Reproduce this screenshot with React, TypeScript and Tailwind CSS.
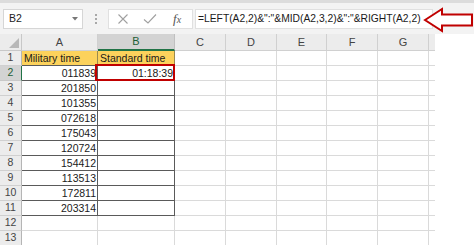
import React from "react";

const cols = ["A", "B", "C", "D", "E", "F", "G", ""];
const widths = [76, 77, 51, 51, 50, 51, 51, 6];
const data = ["011839", "201850", "101355", "072618", "175043", "120724", "154412", "113513", "172811", "203314"];

function Row({ n }: { n: number }) {
  const inTable = n >= 2 && n <= 11;
  const selectedRow = n === 2;
  return (
    <div className="flex h-[15px]">
      <div
        className={`w-[22px] shrink-0 flex items-center justify-center border-b border-r text-[10.5px] ${
          selectedRow
            ? "bg-[#d3d3d3] border-r-[#217346] border-b-[#c8c8c8] text-[#1e5e36]"
            : "bg-[#ececec] border-b-[#d0d0d0] border-r-[#b5b5b5] text-[#444]"
        } ${inTable && !selectedRow ? "border-r-[#6a6a6a]" : ""}`}
      >
        {n}
      </div>
      {widths.map((w, i) => {
        let cls = "border-b border-r border-[#dadada]";
        let content: React.ReactNode = null;
        if (n === 1 && i < 2) {
          cls = "bg-[#fcd25c] border-b border-r border-b-[#5a5a5a] border-r-[#9a8a50] text-[#1a1a1a] pl-[2px]";
          content = i === 0 ? "Military time" : "Standard time";
        } else if (inTable && i < 2) {
          cls = "border-b border-r border-[#5a5a5a] text-right pr-[1px] text-[#1a1a1a]";
          if (i === 0) content = data[n - 2];
          if (i === 1 && n === 2) content = "01:18:39";
        } else if (i === 7) {
          cls = "border-b border-[#dadada]";
        }
        return (
          <div
            key={i}
            style={{ width: w }}
            className={`shrink-0 relative h-[15px] leading-[14px] text-[10.5px] overflow-visible whitespace-nowrap ${cls}`}
          >
            {content}
            {n === 2 && i === 1 && (
              <div className="absolute left-[-3px] top-[-2px] right-[-1px] bottom-[-1px] border-2 border-[#c00000]" />
            )}
          </div>
        );
      })}
    </div>
  );
}

export default function App() {
  return (
    <div
      className="w-[474px] h-[245px] bg-white overflow-hidden relative"
      style={{ fontFamily: '"Liberation Sans", Arial, sans-serif' }}
    >
      {/* formula bar area */}
      <div className="h-[3px] bg-[#dcdcdc]" />
      <div className="h-[31px] bg-[#f3f3f3] flex items-start pt-[6px] pl-[3px]">
        <div className="w-[80px] h-[20px] bg-white border border-[#d6d6d6] flex items-center justify-between pl-[5px] pr-[4px] text-[10.5px] text-[#222]">
          <span>B2</span>
          <svg width="6" height="4" viewBox="0 0 6 4">
            <path d="M0 0 L6 0 L3 3.5 Z" fill="#777" />
          </svg>
        </div>
        <div className="w-[25px] h-[20px] flex flex-col items-center justify-center gap-[2px]">
          <span className="w-[2px] h-[2px] bg-[#a8a8a8]" />
          <span className="w-[2px] h-[2px] bg-[#a8a8a8]" />
          <span className="w-[2px] h-[2px] bg-[#a8a8a8]" />
        </div>
        <div className="w-[85px] h-[20px] bg-white border border-[#e0e0e0] flex items-center">
          <svg width="12" height="12" viewBox="0 0 12 12" className="ml-[8px]">
            <path d="M1.5 1.5 L10.5 10.5 M10.5 1.5 L1.5 10.5" stroke="#a0a0a0" strokeWidth="1.1" />
          </svg>
          <svg width="14" height="12" viewBox="0 0 14 12" className="ml-[14px]">
            <path d="M1 6.5 L5 10 L13 1.5" stroke="#a0a0a0" strokeWidth="1.1" fill="none" />
          </svg>
          <span
            className="ml-[16px] text-[13px] italic text-[#555]"
            style={{ fontFamily: '"Liberation Serif", "Times New Roman", serif' }}
          >
            f<span className="text-[10px]">x</span>
          </span>
        </div>
        <div className="ml-[2px] w-[238px] h-[20px] bg-white border border-[#e0e0e0] flex items-center pl-[2px] text-[10.3px] text-[#1a1a1a] whitespace-nowrap">
          =LEFT(A2,2)&amp;":"&amp;MID(A2,3,2)&amp;":"&amp;RIGHT(A2,2)
        </div>
      </div>

      {/* grid */}
      <div className="w-[435px]">
        <div className="flex h-[17px]">
          <div className="w-[22px] shrink-0 bg-[#ececec] border-b border-r border-[#c8c8c8] relative">
            <svg width="10" height="10" viewBox="0 0 10 10" className="absolute right-[2px] bottom-[2px]">
              <path d="M10 0 L10 10 L0 10 Z" fill="#b8b8b8" />
            </svg>
          </div>
          {widths.map((w, i) => (
            <div
              key={i}
              style={{ width: w }}
              className={`shrink-0 flex items-center justify-center text-[11px] ${
                i === 1
                  ? "bg-[#d3d3d3] border-b-2 border-b-[#217346] border-r border-r-[#c0c0c0] text-[#1e5e36]"
                  : "bg-[#ececec] border-b border-r border-[#d0d0d0] text-[#444]"
              } ${i === 7 ? "border-r-0" : ""}`}
            >
              {cols[i]}
            </div>
          ))}
        </div>
        {Array.from({ length: 13 }, (_, k) => (
          <Row key={k} n={k + 1} />
        ))}
      </div>

      {/* annotation arrow */}
      <svg className="absolute left-0 top-0" width="474" height="245" viewBox="0 0 474 245">
        <polygon
          points="425,20 442,9 442,14.5 472,14.5 472,25.5 442,25.5 442,31"
          fill="white"
          stroke="#c00000"
          strokeWidth="2"
          strokeLinejoin="miter"
        />
      </svg>
    </div>
  );
}
